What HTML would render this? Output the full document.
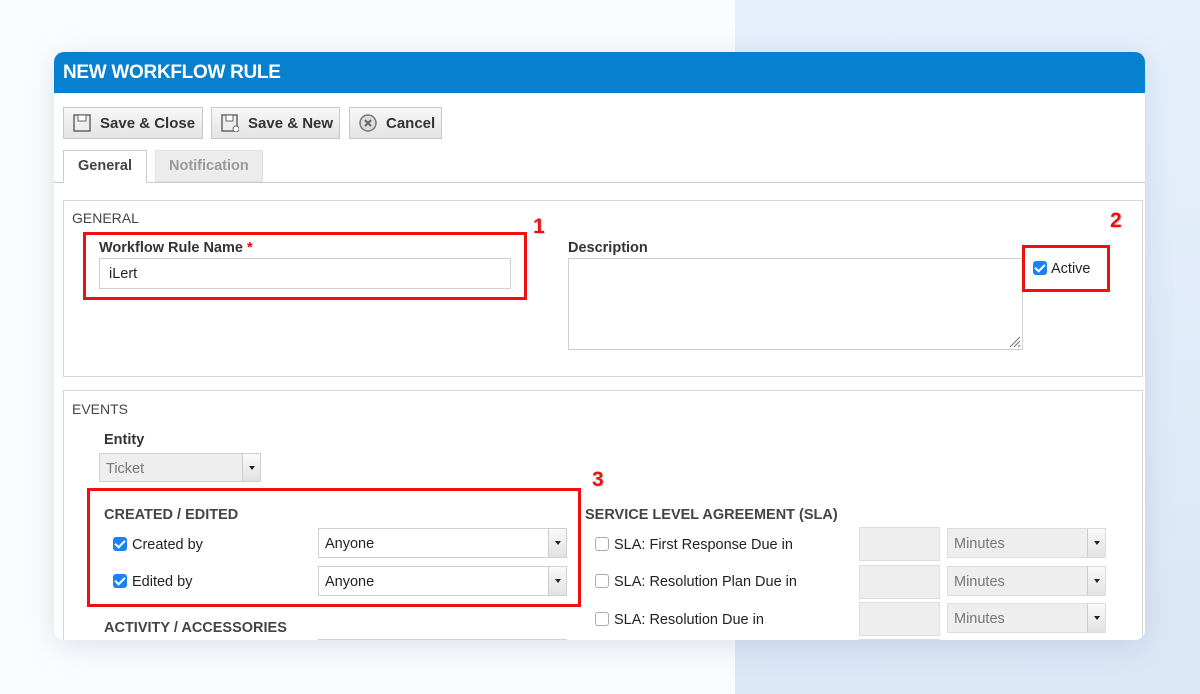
<!DOCTYPE html>
<html><head><style>
*{box-sizing:border-box;margin:0;padding:0}
body{width:1200px;height:694px;overflow:hidden;font-family:"Liberation Sans",Arial,sans-serif;background:#fbfcfe;position:relative}
.bgr{position:absolute;left:735px;top:0;width:465px;height:694px;background:linear-gradient(#e6f0fc,#dbe7f6)}
.card{position:absolute;left:54px;top:52px;width:1091px;height:588px;background:#fff;border-radius:10px;overflow:hidden;box-shadow:0 6px 30px rgba(80,110,160,.18)}
.a{position:absolute}
.hdr{left:0;top:0;width:1091px;height:41px;background:#0680cf;color:#fff;font-weight:bold;font-size:19px;padding:10px 0 0 9px;letter-spacing:-0.3px}
.btn{height:32px;top:55px;border:1px solid #c8c8c8;background:linear-gradient(#f7f7f7,#e4e4e4);font-weight:bold;font-size:15px;color:#333;padding:7px 0 0 36px}
.ico{position:absolute;left:9px;top:6px;width:18px;height:18px}
.fs{border:1px solid #d6d6d6}
.lg{font-size:14px;color:#444}
.lb{font-size:14.5px;font-weight:bold;color:#333;margin-top:2px}
.inp{border:1px solid #cfcfcf;background:#fff}
.sel{border:1px solid #d0d0d0;background:#fff;font-size:14.5px;color:#222;padding:7px 0 0 6px}
.sel:after{content:"";position:absolute;right:0;top:0;width:17px;height:100%;background:linear-gradient(#fafafa,#e2e2e2);border-left:1px solid #ccc}
.sel i{position:absolute;right:5px;top:50%;margin-top:-2px;border:3.5px solid transparent;border-top:4px solid #222;border-bottom:0;z-index:2}
.red{border:3px solid #f01010}
.num{color:#f01010;font-weight:bold;font-size:21px;text-shadow:1px 1px 1px #ccc}
.cb{width:14px;height:14px;border-radius:3px;background:#1a82f7}
.cb:after{content:"";position:absolute;left:4px;top:1px;width:4px;height:8px;border:solid #fff;border-width:0 2px 2px 0;transform:rotate(45deg)}
.ub{width:14px;height:14px;border-radius:3px;border:1px solid #aaa;background:#fff}
.t{font-size:14.5px;color:#222;margin-top:3px}
.g{background:#eee;border:1px solid #ddd}
.tab{margin-top:0}
</style></head><body>
<div class="bgr"></div>
<div class="card">
<div class="a hdr">NEW WORKFLOW RULE</div>
<div class="a btn" style="left:9px;width:140px"><svg class="ico" viewBox="0 0 18 18"><rect x="1" y="1" width="16" height="16" fill="#eee" stroke="#666" stroke-width="1.5"/><rect x="5" y="1" width="8" height="6" fill="#fff" stroke="#666"/></svg>Save &amp; Close</div>
<div class="a btn" style="left:157px;width:129px"><svg class="ico" viewBox="0 0 18 18"><rect x="1" y="1" width="15" height="16" fill="#eee" stroke="#666" stroke-width="1.5"/><rect x="5" y="1" width="7" height="6" fill="#fff" stroke="#666"/><circle cx="15" cy="15" r="3" fill="#fff" stroke="#666"/></svg>Save &amp; New</div>
<div class="a btn" style="left:295px;width:93px"><svg class="ico" viewBox="0 0 18 18"><circle cx="9" cy="9" r="8" fill="#ddd" stroke="#777" stroke-width="1.5"/><path d="M6 6l6 6M12 6l-6 6" stroke="#666" stroke-width="2"/></svg>Cancel</div>
<div class="a" style="left:0;top:130px;width:1091px;height:1px;background:#ccc"></div>
<div class="a lb tab" style="left:9px;top:98px;width:84px;height:33px;background:#fff;border:1px solid #ccc;border-bottom:none;padding:7px 0 0 14px;color:#444">General</div>
<div class="a lb tab" style="left:101px;top:98px;width:108px;height:32px;background:#ececec;border:1px solid #e0e0e0;padding:7px 0 0 13px;color:#999">Notification</div>

<div class="a fs" style="left:9px;top:148px;width:1080px;height:177px"></div>
<div class="a lg" style="left:18px;top:158px">GENERAL</div>
<div class="a lb" style="left:45px;top:186px">Workflow Rule Name <span style="color:#e00">*</span></div>
<div class="a inp t" style="left:45px;top:206px;width:412px;height:31px;padding:6px 0 0 9px;margin-top:0"><span style="position:relative;top:1px">iLert</span></div>
<div class="a red" style="left:29px;top:180px;width:444px;height:68px"></div>
<div class="a num" style="left:479px;top:163px">1</div>
<div class="a lb" style="left:514px;top:186px">Description</div>
<div class="a inp" style="left:514px;top:206px;width:455px;height:92px"><svg style="position:absolute;right:1px;bottom:1px" width="14" height="14"><path d="M13 3L3 13M13 7L7 13M13 11L11 13" stroke="#777"/></svg></div>
<div class="a red" style="left:968px;top:193px;width:88px;height:47px"></div>
<div class="a cb" style="left:979px;top:209px"></div>
<div class="a t" style="left:997px;top:206px">Active</div>
<div class="a num" style="left:1056px;top:157px">2</div>

<div class="a fs" style="left:9px;top:338px;width:1080px;height:300px"></div>
<div class="a lg" style="left:18px;top:349px">EVENTS</div>
<div class="a lb" style="left:50px;top:378px">Entity</div>
<div class="a sel" style="left:45px;top:401px;width:162px;height:29px;background:#eee;color:#777">Ticket<i></i></div>
<div class="a num" style="left:538px;top:416px">3</div>
<div class="a red" style="left:33px;top:436px;width:494px;height:119px"></div>
<div class="a lb" style="left:50px;top:453px;color:#444">CREATED / EDITED</div>
<div class="a cb" style="left:59px;top:485px"></div><div class="a t" style="left:78px;top:482px">Created by</div>
<div class="a sel" style="left:264px;top:476px;width:249px;height:30px">Anyone<i></i></div>
<div class="a cb" style="left:59px;top:522px"></div><div class="a t" style="left:78px;top:519px">Edited by</div>
<div class="a sel" style="left:264px;top:514px;width:249px;height:30px">Anyone<i></i></div>
<div class="a lb" style="left:50px;top:566px;color:#444">ACTIVITY / ACCESSORIES</div>
<div class="a inp" style="left:264px;top:587px;width:249px;height:10px"></div>

<div class="a lb" style="left:531px;top:453px;color:#444">SERVICE LEVEL AGREEMENT (SLA)</div>
<div class="a ub" style="left:541px;top:485px"></div><div class="a t" style="left:560px;top:482px">SLA: First Response Due in</div>
<div class="a g" style="left:805px;top:475px;width:81px;height:34px"></div>
<div class="a sel g" style="left:893px;top:476px;width:159px;height:30px;color:#777">Minutes<i></i></div>
<div class="a ub" style="left:541px;top:522px"></div><div class="a t" style="left:560px;top:519px">SLA: Resolution Plan Due in</div>
<div class="a g" style="left:805px;top:513px;width:81px;height:34px"></div>
<div class="a sel g" style="left:893px;top:514px;width:159px;height:30px;color:#777">Minutes<i></i></div>
<div class="a ub" style="left:541px;top:560px"></div><div class="a t" style="left:560px;top:557px">SLA: Resolution Due in</div>
<div class="a g" style="left:805px;top:550px;width:81px;height:34px"></div>
<div class="a sel g" style="left:893px;top:551px;width:159px;height:30px;color:#777">Minutes<i></i></div>
<div class="a g" style="left:805px;top:587px;width:81px;height:10px"></div>
<div class="a g" style="left:893px;top:588px;width:159px;height:10px"></div>
</div>
</body></html>
